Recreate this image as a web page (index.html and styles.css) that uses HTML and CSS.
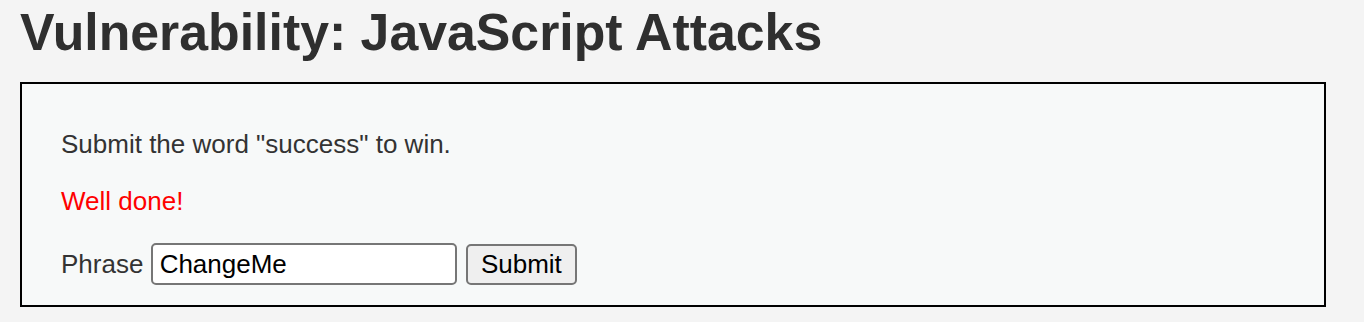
FILE: index.html
```html
<!DOCTYPE html>
<html lang="en">
<head>
  <meta charset="UTF-8" />
  <title>Vulnerability: JavaScript Attacks</title>
  <link rel="stylesheet" href="styles.css">
</head>
<body>

  <div class="body-padded">
    <h1>Vulnerability: JavaScript Attacks</h1>

    <div class="vulnerable-code-area">
      <p>Submit the word "success" to win.</p>
      <p class="message">Well done!</p>

      <form name="low_js" method="post">
        <label for="phrase">Phrase</label>
        <input type="text" name="phrase" value="ChangeMe" id="phrase" class="phrase-input">
        <input type="submit" id="send" name="send" value="Submit" class="btn-submit">
      </form>
    </div>
  </div>

</body>
</html>
```

FILE: styles.css
```css
body {
  margin: 0;
  padding: 0;
  background-color: #f4f4f4;
  color: #333;
  font-family: 'Liberation Sans', Arial, sans-serif;
  font-size: 26px;
}

.body-padded {
  padding: 0 38px 0 20px;
}

h1 {
  font-size: 51.8px;
  line-height: 60px;
  font-weight: bold;
  color: #2f2f2f;
  margin: 2px 0 20px;
}

.vulnerable-code-area {
  background-color: #f7f9f9;
  border: 2px solid #000;
  padding: 19px 39px 20px;
}

.vulnerable-code-area p {
  margin: 26px 0;
  line-height: 31px;
}

.message {
  color: #ff0000;
}

form {
  margin: 0;
  line-height: 31px;
}

.phrase-input,
.btn-submit {
  font-family: inherit;
  font-size: 26px;
  color: #000;
  box-sizing: border-box;
  height: 42px;
  border: 2px solid #767676;
  border-radius: 5px;
  vertical-align: baseline;
  margin: 0;
}

.phrase-input {
  width: 306px;
  padding: 0 7px;
  background: #fff;
}

.btn-submit {
  width: 111px;
  height: 41px;
  padding: 0 12px;
  margin-left: 2px;
  background: #efefef;
  cursor: pointer;
}
```
